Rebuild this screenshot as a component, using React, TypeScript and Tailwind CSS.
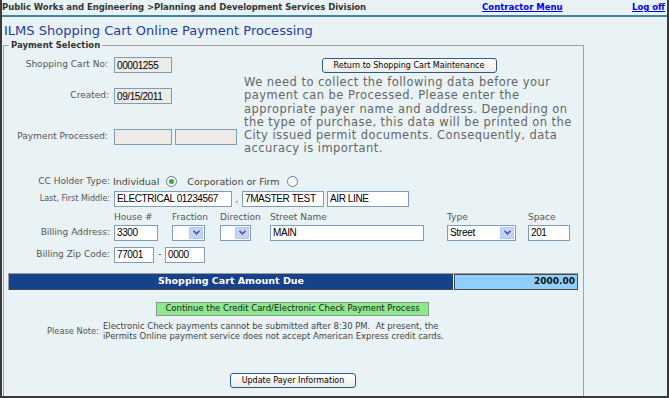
import React from "react";

const inputCls =
  "h-[16px] border border-[#7f9db9] px-[2px] text-[10px] leading-[14px] tracking-[-0.4px] text-black font-['Liberation_Sans',Arial,sans-serif] outline-none";

function Select({ w, value }: { w: string; value?: string }) {
  return (
    <div className={`${w} h-[16px] border border-[#7f9db9] bg-white flex items-stretch`}>
      <div className="flex-1 px-[2px] text-[10px] leading-[14px] tracking-[-0.3px] font-['Liberation_Sans',Arial,sans-serif] text-black">
        {value ?? ""}
      </div>
      <div className="w-[14px] m-[1px] bg-[#c3d3fd] border border-[#b4c8f5] flex items-center justify-center">
        <svg width="7" height="5" viewBox="0 0 7 5">
          <path d="M0.5 0.8 L3.5 3.8 L6.5 0.8" fill="none" stroke="#4d6185" strokeWidth="1.6" />
        </svg>
      </div>
    </div>
  );
}

function Radio({ checked }: { checked?: boolean }) {
  return (
    <div className="w-[11px] h-[11px] rounded-full border border-[#5a7aa0] bg-white flex items-center justify-center">
      {checked && <div className="w-[5px] h-[5px] rounded-full bg-[#2fb12f]" />}
    </div>
  );
}

const btnCls =
  "h-[15px] border border-[#2d5b87] rounded-[3px] bg-gradient-to-b from-white to-[#ecebe5] text-[8px] leading-[13px] text-black font-['DejaVu_Sans',Verdana,sans-serif] flex items-center justify-center";

export default function App() {
  return (
    <div className="w-[669px] h-[398px] overflow-hidden bg-[#e9f3f5] border-l-2 border-b-2 border-r-2 border-[#3a3a3a] font-['DejaVu_Sans',Verdana,sans-serif]">
      {/* header */}
      <div className="h-[17px] border-b-2 border-[#3f87a6] flex items-center text-[8.5px] leading-[14px] pb-[1px]">
        <div className="font-bold text-[#333] tracking-[-0.05px]">
          Public Works and Engineering &gt;Planning and Development Services Division
        </div>
        <a className="ml-[116px] font-bold text-[#0000ee] underline">Contractor Menu</a>
        <a className="ml-auto mr-[2px] font-bold text-[#0000ee] underline">Log off</a>
      </div>
      {/* title */}
      <div className="mt-[6px] ml-[2px] text-[13px] leading-[16px] text-[#1f3c9c] tracking-[0.02px]">
        ILMS Shopping Cart Online Payment Processing
      </div>
      <fieldset className="ml-[1px] mt-[1px] w-[581px] h-[380px] border border-[#a6a49a] pt-0">
        <legend className="ml-[5px] px-[2px] text-[8.5px] leading-[11px] font-bold text-[#333]">
          Payment Selection
        </legend>
        {/* top section */}
        <div className="flex mt-[2px]">
          <div className="w-[236px] text-[9px] text-[#555]">
            <div className="flex items-center mt-[4px]">
              <div className="w-[106px] text-right pr-[2px]">Shopping Cart No:</div>
              <input readOnly className={`${inputCls} ml-[4px] w-[58px] bg-[#ecebe6]`} value="00001255" />
            </div>
            <div className="flex items-center mt-[15px]">
              <div className="w-[106px] text-right pr-[1px]">Created:</div>
              <input readOnly className={`${inputCls} ml-[4px] w-[58px] bg-[#ecebe6]`} value="09/15/2011" />
            </div>
            <div className="flex items-center mt-[25px]">
              <div className="w-[106px] text-right pr-[2px]">Payment Processed:</div>
              <input readOnly className={`${inputCls} ml-[4px] w-[58px] bg-[#ecebe6]`} value="" />
              <input readOnly className={`${inputCls} ml-[3px] w-[62px] bg-[#ecebe6]`} value="" />
            </div>
          </div>
          <div className="ml-[4px] w-[330px] flex flex-col items-center">
            <div className={`${btnCls} mt-[5px] w-[175px]`}>Return to Shopping Cart Maintenance</div>
            <p className="mt-[3px] w-[330px] text-[11.5px] leading-[13.3px] text-[#666] tracking-[0.45px] whitespace-pre">
              {"We need to collect the following data before your\npayment can be Processed. Please enter the\nappropriate payer name and address. Depending on\nthe type of purchase, this data will be printed on the\nCity issued permit documents. Consequently, data\naccuracy is important."}
            </p>
          </div>
        </div>
        {/* CC Holder */}
        <div className="flex items-center mt-[19px] h-[14px] text-[#555]">
          <div className="w-[106px] text-right text-[9px]">CC Holder Type:</div>
          <div className="ml-[3px] text-[9.5px] text-[#444]">Individual</div>
          <div className="ml-[7px]"><Radio checked /></div>
          <div className="ml-[10px] text-[9.5px] text-[#444]">Corporation or Firm</div>
          <div className="ml-[7px]"><Radio /></div>
        </div>
        {/* Last First Middle */}
        <div className="flex items-center mt-[2px]">
          <div className="w-[106px] text-right text-[8px] text-[#555]">Last, First Middle:</div>
          <input readOnly className={`${inputCls} ml-[4px] w-[118px] bg-white`} value="ELECTRICAL 01234567" />
          <div className="w-[10px] text-center text-[9px] text-[#555] leading-[16px]">,</div>
          <input readOnly className={`${inputCls} w-[82px] bg-white`} value="7MASTER TEST" />
          <input readOnly className={`${inputCls} ml-[3px] w-[82px] bg-white`} value="AIR LINE" />
        </div>
        {/* headers */}
        <div className="flex items-center mt-[4px] h-[13px] text-[9px] text-[#555]">
          <div className="w-[110px]" />
          <div className="w-[58px]">House #</div>
          <div className="w-[48px]">Fraction</div>
          <div className="w-[50px]">Direction</div>
          <div className="w-[177px]">Street Name</div>
          <div className="w-[81px]">Type</div>
          <div>Space</div>
        </div>
        {/* billing address */}
        <div className="flex items-center mt-[1px]">
          <div className="w-[106px] text-right text-[9px] text-[#555]">Billing Address:</div>
          <input readOnly className={`${inputCls} ml-[4px] w-[44px] bg-white`} value="3300" />
          <div className="ml-[14px]"><Select w="w-[33px]" /></div>
          <div className="ml-[15px]"><Select w="w-[31px]" /></div>
          <input readOnly className={`${inputCls} ml-[19px] w-[154px] bg-white`} value="MAIN" />
          <div className="ml-[23px]"><Select w="w-[69px]" value="Street" /></div>
          <input readOnly className={`${inputCls} ml-[12px] w-[42px] bg-white`} value="201" />
        </div>
        {/* zip */}
        <div className="flex items-center mt-[6px]">
          <div className="w-[106px] text-right text-[9px] text-[#555]">Billing Zip Code:</div>
          <input readOnly className={`${inputCls} ml-[4px] w-[40px] bg-white`} value="77001" />
          <div className="w-[11px] text-center text-[9px] text-[#555]">-</div>
          <input readOnly className={`${inputCls} w-[40px] bg-white`} value="0000" />
        </div>
        {/* amount due */}
        <div className="mt-[10px] ml-[4px] w-[570px] h-[17px] flex border-t border-[#9a9a9a] border-l border-l-[#9a9a9a]">
          <div className="w-[444px] bg-[#15428b] border-b border-[#4a4a4a] flex items-center justify-center text-white font-bold text-[9.5px]">
            Shopping Cart Amount Due
          </div>
          <div className="flex-1 ml-[1px] bg-[#8fcfff] border border-[#4a4a4a] flex items-center justify-end pr-[2px] text-[#111] font-bold text-[9px]">
            2000.00
          </div>
        </div>
        {/* green button */}
        <div className="mt-[12px] ml-[152px] w-[273px] h-[14px] bg-[#8ee88e] border border-[#8a9a8a] flex items-center justify-center text-[8.5px] text-[#222]">
          Continue the Credit Card/Electronic Check Payment Process
        </div>
        {/* note */}
        <div className="flex items-center mt-[5px]">
          <div className="w-[95px] text-right text-[8.3px] text-[#555]">Please Note:</div>
          <div className="ml-[4px] text-[8.45px] leading-[10px] text-[#444] whitespace-pre">
            {"Electronic Check payments cannot be submitted after 8:30 PM.  At present, the\niPermits Online payment service does not accept American Express credit cards."}
          </div>
        </div>
        <div className={`${btnCls} mt-[32px] ml-[226px] w-[126px] text-[8.5px]`}>Update Payer Information</div>
      </fieldset>
    </div>
  );
}
